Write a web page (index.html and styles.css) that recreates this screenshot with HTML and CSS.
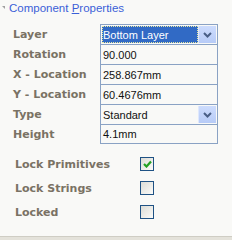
FILE: index.html
```html
<!DOCTYPE html>
<html lang="en">
<head>
    <meta charset="UTF-8">
    <title>Component Properties</title>
    <link rel="stylesheet" href="styles.css">
</head>
<body>
    <div class="panel">
        <div class="title"><span class="arrow"></span>Component <u>P</u>roperties</div>

        <div class="props">
            <div class="lbl">Layer</div>
            <div class="val select focused">
                <span class="sel-text">Bottom Layer</span>
                <span class="drop"><svg width="9" height="6" viewBox="0 0 9 6"><polyline points="1,1 4.5,4.5 8,1" fill="none" stroke="#4a5f86" stroke-width="2"/></svg></span>
            </div>

            <div class="lbl">Rotation</div>
            <div class="val">90.000</div>

            <div class="lbl">X - Location</div>
            <div class="val">258.867mm</div>

            <div class="lbl">Y - Location</div>
            <div class="val">60.4676mm</div>

            <div class="lbl">Type</div>
            <div class="val select">
                <span class="sel-text">Standard</span>
                <span class="drop"><svg width="9" height="6" viewBox="0 0 9 6"><polyline points="1,1 4.5,4.5 8,1" fill="none" stroke="#4a5f86" stroke-width="2"/></svg></span>
            </div>

            <div class="lbl">Height</div>
            <div class="val last">4.1mm</div>
        </div>

        <div class="locks">
            <div class="lbl">Lock Primitives</div>
            <div class="chk"><span class="box"><svg width="9" height="8" viewBox="0 0 9 8"><polyline points="1,4 3.5,6.5 8,1.5" fill="none" stroke="#22a022" stroke-width="2.2"/></svg></span></div>

            <div class="lbl">Lock Strings</div>
            <div class="chk"><span class="box"></span></div>

            <div class="lbl">Locked</div>
            <div class="chk"><span class="box"></span></div>
        </div>
    </div>
    <div class="footer"></div>
</body>
</html>
```

FILE: styles.css
```css
body {
    margin: 0;
    width: 232px;
    height: 240px;
    background: #f9f9f7;
    font-family: 'Liberation Sans', Arial, sans-serif;
    overflow: hidden;
}
.panel {
    height: 236px;
}
.title {
    height: 16px;
    line-height: 16px;
    padding-left: 9px;
    color: #3b5fd8;
    font-size: 11.5px;
    position: relative;
}
.title u {
    text-decoration: underline;
}
.arrow {
    position: absolute;
    left: 2px;
    top: 6px;
    width: 0;
    height: 0;
    border-left: 3px solid transparent;
    border-top: 3px solid #a0a0a0;
}
.props {
    margin-top: 8px;
    display: grid;
    grid-template-columns: 100px 118px;
    grid-auto-rows: 20px;
}
.lbl {
    font-family: 'DejaVu Sans', sans-serif;
    font-weight: bold;
    font-size: 11px;
    color: #7a7264;
    padding-left: 13px;
    display: flex;
    align-items: center;
}
.val {
    border: 1px solid #8aa2c4;
    border-bottom: none;
    font-size: 11px;
    color: #111;
    padding-left: 2px;
    display: flex;
    align-items: center;
}
.val.last {
    border-bottom: 1px solid #8aa2c4;
}
.select {
    padding: 1px;
    justify-content: space-between;
}
.sel-text {
    flex: 1;
    height: 100%;
    display: flex;
    align-items: center;
    padding-left: 1px;
}
.focused .sel-text {
    background: #316ac5;
    color: #fff;
    outline: 1px dotted #e8e8a0;
    outline-offset: -1px;
}
.drop {
    width: 17px;
    height: 100%;
    background: linear-gradient(#cddcfd, #b7cbf7);
    border-left: 1px solid #dfe8fd;
    display: flex;
    align-items: center;
    justify-content: center;
}
.locks {
    margin-top: 8px;
    display: grid;
    grid-template-columns: 140px 40px;
    grid-auto-rows: 24px;
}
.locks .lbl {
    padding-left: 15px;
}
.chk {
    display: flex;
    align-items: center;
}
.box {
    width: 14px;
    height: 14px;
    box-sizing: border-box;
    border: 1px solid #1f5284;
    background: linear-gradient(135deg, #dcdcd6, #fbfbf9);
    display: flex;
    align-items: center;
    justify-content: center;
}
.footer {
    height: 3px;
    border-top: 1px solid #cfcdc4;
    background: #e4e2da;
}
```
